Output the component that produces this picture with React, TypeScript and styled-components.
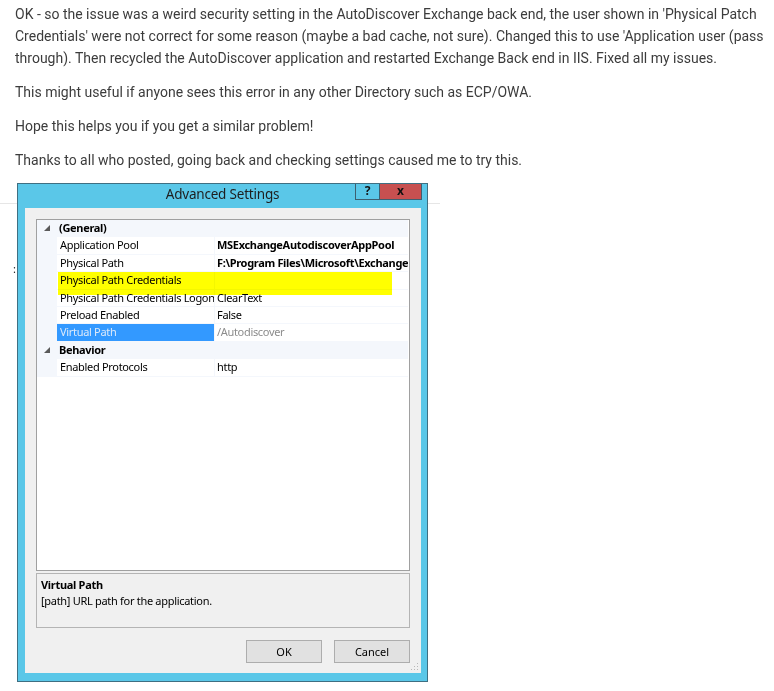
import React from "react";
import styled, { createGlobalStyle } from "styled-components";

const GlobalStyle = createGlobalStyle`
  html, body {
    margin: 0;
    padding: 0;
    background: #ffffff;
  }
`;

const UI_FONT = `"Noto Sans", "Open Sans", sans-serif`;

type Prop = {
  name: string;
  value: string;
  bold?: boolean;
  readOnly?: boolean;
  selected?: boolean;
};

type Group = { title: string; props: Prop[] };

const groups: Group[] = [
  {
    title: "(General)",
    props: [
      { name: "Application Pool", value: "MSExchangeAutodiscoverAppPool", bold: true },
      { name: "Physical Path", value: "F:\\Program Files\\Microsoft\\Exchange", bold: true },
      { name: "Physical Path Credentials", value: "" },
      { name: "Physical Path Credentials Logon", value: "ClearText" },
      { name: "Preload Enabled", value: "False" },
      { name: "Virtual Path", value: "/Autodiscover", readOnly: true, selected: true },
    ],
  },
  {
    title: "Behavior",
    props: [{ name: "Enabled Protocols", value: "http" }],
  },
];

const App: React.FC = () => {
  return (
    <>
      <GlobalStyle />
      <Page>
        <Para>
          OK - so the issue was a weird security setting in the AutoDiscover Exchange back end, the user shown in
          'Physical Patch Credentials' were not correct for some reason (maybe a bad cache, not sure). Changed this
          to use 'Application user (pass through). Then recycled the AutoDiscover application and restarted Exchange
          Back end in IIS. Fixed all my issues.
        </Para>
        <Para>This might useful if anyone sees this error in any other Directory such as ECP/OWA.</Para>
        <Para>Hope this helps you if you get a similar problem!</Para>
        <Para>Thanks to all who posted, going back and checking settings caused me to try this.</Para>

        <Shot>
          <Colon>:</Colon>
          <Dialog>
            <TitleBar>
              <span />
              <Title>Advanced Settings</Title>
              <CaptionButtons>
                <CaptionButton>?</CaptionButton>
                <CaptionButton $close>x</CaptionButton>
              </CaptionButtons>
            </TitleBar>
            <Client>
              <PropertyGrid>
                {groups.map((g) => (
                  <React.Fragment key={g.title}>
                    <Row>
                      <Gutter>
                        <svg width="6" height="6" viewBox="0 0 6 6">
                          <path d="M6 0 L6 6 L0 6 Z" fill="#5a5a5a" />
                        </svg>
                      </Gutter>
                      <GroupTitle>{g.title}</GroupTitle>
                    </Row>
                    {g.props.map((p) => (
                      <Row key={p.name}>
                        <Gutter />
                        <NameCell $selected={p.selected}>{p.name}</NameCell>
                        <ValueCell $bold={p.bold} $readOnly={p.readOnly}>
                          {p.value}
                        </ValueCell>
                      </Row>
                    ))}
                  </React.Fragment>
                ))}
                <Highlight />
              </PropertyGrid>
              <Description>
                <DescTitle>Virtual Path</DescTitle>
                <DescText>[path] URL path for the application.</DescText>
              </Description>
              <ButtonRow>
                <Button>OK</Button>
                <Button>Cancel</Button>
              </ButtonRow>
              <Grip width="8" height="8" viewBox="0 0 8 8">
                <rect x="6" y="0" width="1" height="1" fill="#b8b8b8" />
                <rect x="3" y="3" width="1" height="1" fill="#b8b8b8" />
                <rect x="6" y="3" width="1" height="1" fill="#b8b8b8" />
                <rect x="0" y="6" width="1" height="1" fill="#b8b8b8" />
                <rect x="3" y="6" width="1" height="1" fill="#b8b8b8" />
                <rect x="6" y="6" width="1" height="1" fill="#b8b8b8" />
              </Grip>
            </Client>
          </Dialog>
        </Shot>
      </Page>
    </>
  );
};

export default App;

const Page = styled.div`
  padding: 3px 8px 0 15px;
  font-family: Roboto, "Noto Sans", sans-serif;
  color: #3c3c3c;
`;

const Para = styled.p`
  margin: 0 0 12px;
  font-size: 14px;
  line-height: 22px;
`;

const Shot = styled.div`
  position: relative;
  width: 440px;
  margin: 12px 0 0 -15px;
  padding-left: 17px;
  box-sizing: border-box;
  background: linear-gradient(#e6e6e6, #e6e6e6) 0 20px / 100% 1px no-repeat;
`;

const Colon = styled.span`
  position: absolute;
  left: 13px;
  top: 78px;
  font: 11px ${UI_FONT};
  color: #222;
`;

const Dialog = styled.div`
  width: 411px;
  height: 499px;
  box-sizing: border-box;
  border: 1px solid #3f6f82;
  background: #5ac7e8;
  display: flex;
  flex-direction: column;
`;

const TitleBar = styled.div`
  height: 24px;
  display: grid;
  grid-template-columns: 1fr auto 1fr;
  align-items: start;
`;

const Title = styled.div`
  font: 13.5px ${UI_FONT};
  color: #1e1e1e;
  line-height: 20px;
  letter-spacing: -0.2px;
`;

const CaptionButtons = styled.div`
  display: flex;
  justify-content: flex-end;
  margin-right: 5px;
`;

const CaptionButton = styled.div<{ $close?: boolean }>`
  width: ${(p) => (p.$close ? "42px" : "25px")};
  height: 16px;
  box-sizing: border-box;
  border: 1px solid #3d5f70;
  border-top: none;
  border-left-width: ${(p) => (p.$close ? "0" : "1px")};
  background: ${(p) => (p.$close ? "#c75050" : "#5ac7e8")};
  color: #111;
  font: bold 12px ${UI_FONT};
  line-height: 14px;
  text-align: center;
`;

const Client = styled.div`
  position: relative;
  flex: 1;
  margin: 0 6px 8px 7px;
  background: #f0f0f0;
  padding: 11px 11px 10px;
  display: flex;
  flex-direction: column;
`;

const PropertyGrid = styled.div`
  position: relative;
  height: 352px;
  box-sizing: border-box;
  border: 1px solid #a0a0a0;
  background: #ffffff;
  font: 11px ${UI_FONT};
  letter-spacing: -0.32px;
  color: #000;
  overflow: hidden;
`;

const Row = styled.div`
  display: grid;
  grid-template-columns: 20px 158px 1fr;
  height: 17.4px;
  box-sizing: border-box;
  border-bottom: 1px solid #f4f7fc;
  margin-right: 1px;
  background: #fff;
`;

const Gutter = styled.div`
  background: #f4f7fc;
  display: flex;
  align-items: center;
  justify-content: center;
`;

const GroupTitle = styled.div`
  grid-column: 2 / 4;
  background: #f4f7fc;
  font-weight: bold;
  padding-left: 2px;
  line-height: 16px;
`;

const NameCell = styled.div<{ $selected?: boolean }>`
  padding-left: 3px;
  line-height: 16px;
  white-space: nowrap;
  overflow: hidden;
  border-right: 1px solid #f4f7fc;
  background: ${(p) => (p.$selected ? "#3399ff" : "transparent")};
  color: ${(p) => (p.$selected ? "#dce9fa" : "#000")};
`;

const ValueCell = styled.div<{ $bold?: boolean; $readOnly?: boolean }>`
  padding-left: 2px;
  line-height: 16px;
  white-space: nowrap;
  overflow: hidden;
  font-weight: ${(p) => (p.$bold ? "bold" : "normal")};
  color: ${(p) => (p.$readOnly ? "#8c8c8c" : "#000")};
`;

const Highlight = styled.div`
  position: absolute;
  left: 21px;
  top: 52px;
  width: 334px;
  height: 23px;
  background: #ffff00;
  mix-blend-mode: multiply;
`;

const Description = styled.div`
  margin-top: 2px;
  height: 55px;
  box-sizing: border-box;
  border: 1px solid #b4b4b4;
  padding: 3px 4px;
  font: 11px ${UI_FONT};
  letter-spacing: -0.3px;
  color: #000;
`;

const DescTitle = styled.div`
  font-weight: bold;
  line-height: 16px;
`;

const DescText = styled.div`
  line-height: 16px;
`;

const ButtonRow = styled.div`
  margin-top: 12px;
  display: flex;
  justify-content: flex-end;
  gap: 12px;
`;

const Button = styled.div`
  width: 76px;
  height: 23px;
  box-sizing: border-box;
  border: 1px solid #adadad;
  background: #e1e1e1;
  font: 11px ${UI_FONT};
  line-height: 21px;
  text-align: center;
  color: #000;
`;

const Grip = styled.svg`
  position: absolute;
  right: 2px;
  bottom: 2px;
`;
